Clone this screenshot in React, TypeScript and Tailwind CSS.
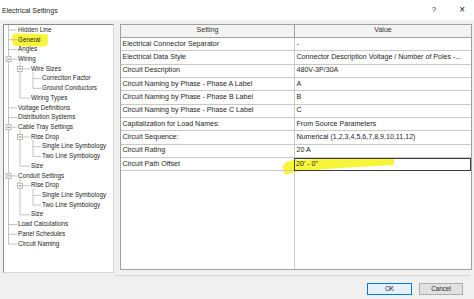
import React from "react";

type Node = { label: string; level: number; exp?: boolean };

const tree: Node[] = [
  { label: "Hidden Line", level: 0 },
  { label: "General", level: 0 },
  { label: "Angles", level: 0 },
  { label: "Wiring", level: 0, exp: true },
  { label: "Wire Sizes", level: 1, exp: true },
  { label: "Correction Factor", level: 2 },
  { label: "Ground Conductors", level: 2 },
  { label: "Wiring Types", level: 1 },
  { label: "Voltage Definitions", level: 0 },
  { label: "Distribution Systems", level: 0 },
  { label: "Cable Tray Settings", level: 0, exp: true },
  { label: "Rise Drop", level: 1, exp: true },
  { label: "Single Line Symbology", level: 2 },
  { label: "Two Line Symbology", level: 2 },
  { label: "Size", level: 1 },
  { label: "Conduit Settings", level: 0, exp: true },
  { label: "Rise Drop", level: 1, exp: true },
  { label: "Single Line Symbology", level: 2 },
  { label: "Two Line Symbology", level: 2 },
  { label: "Size", level: 1 },
  { label: "Load Calculations", level: 0 },
  { label: "Panel Schedules", level: 0 },
  { label: "Circuit Naming", level: 0 },
];

const rows: [string, string][] = [
  ["Electrical Connector Separator", "-"],
  ["Electrical Data Style", "Connector Description Voltage / Number of Poles -..."],
  ["Circuit Description", "480V-3P/30A"],
  ["Circuit Naming by Phase - Phase A Label", "A"],
  ["Circuit Naming by Phase - Phase B Label", "B"],
  ["Circuit Naming by Phase - Phase C Label", "C"],
  ["Capitalization for Load Names:", "From Source Parameters"],
  ["Circuit Sequence:", "Numerical (1,2,3,4,5,6,7,8,9,10,11,12)"],
  ["Circuit Rating", "20 A"],
  ["Circuit Path Offset", "20' - 0\""],
];

const RH = 9.73;
const Y0 = 4.97;
const LX = [4.5, 16, 29];
const TX = [14, 27, 38];

function TreeLines() {
  const lines: React.ReactNode[] = [];
  const cy = (i: number) => Y0 + RH * i;
  lines.push(<line key="v0" x1={LX[0]} y1={0} x2={LX[0]} y2={cy(tree.length - 1)} />);
  tree.forEach((n, i) => {
    const x = LX[n.level];
    lines.push(<line key={"h" + i} x1={x} y1={cy(i)} x2={TX[n.level] - 1} y2={cy(i)} />);
    if (n.exp) {
      let last = -1;
      for (let j = i + 1; j < tree.length; j++) {
        if (tree[j].level <= n.level) break;
        if (tree[j].level === n.level + 1) last = j;
      }
      if (last > 0) {
        const cx = LX[n.level + 1];
        lines.push(<line key={"vc" + i} x1={cx} y1={cy(i) + 3} x2={cx} y2={cy(last)} />);
      }
    }
  });
  const boxes = tree.map((n, i) =>
    n.exp ? (
      <g key={"b" + i}>
        <rect x={LX[n.level] - 2.5} y={cy(i) - 2.5} width={5} height={5} fill="#fff" stroke="#a8a8a8" strokeWidth={0.8} />
        <line x1={LX[n.level] - 1.3} y1={cy(i)} x2={LX[n.level] + 1.3} y2={cy(i)} stroke="#555" strokeWidth={0.8} />
      </g>
    ) : null
  );
  return (
    <svg className="absolute inset-0 pointer-events-none" width="110" height="248">
      <path d="M8 10.5 Q9 8.5 12 8.5 L42 9 Q44.5 9.5 44 13 L43.5 20 Q42 22 38 21.5 L12 21 Q9 21 8.5 18 Z" fill="#f7f53a" />
      <g stroke="#b4b4b4" strokeWidth={0.8}>{lines}</g>
      {boxes}
    </svg>
  );
}

export default function App() {
  return (
    <div
      className="w-[474px] h-[299px] bg-[#f0f0f0] flex flex-col text-[#1e1e1e] overflow-hidden relative"
      style={{ fontFamily: '"Liberation Sans", Arial, sans-serif' }}
    >
      {/* Title bar */}
      <div className="h-[20px] bg-white flex items-center pl-[2px] pr-[9px] shrink-0">
        <span className="text-[7px] leading-none">Electrical Settings</span>
        <span className="ml-auto text-[8px] leading-none mr-[23px]">?</span>
        <span className="text-[10px] leading-none">×</span>
      </div>

      {/* Body */}
      <div className="flex pt-[4px]">
        {/* Tree */}
        <div className="ml-[3px] w-[111px] h-[249px] bg-white border border-[#8a8a8a] border-r-[#d8d8d8] border-b-[#d8d8d8] relative shrink-0">
          <TreeLines />
          <div className="relative flex flex-col pt-[0.1px]">
            {tree.map((n, i) => (
              <div
                key={i}
                className="h-[9.73px] flex items-center text-[6.3px] leading-none whitespace-nowrap"
                style={{ paddingLeft: TX[n.level] }}
              >
                {n.label}
              </div>
            ))}
          </div>
        </div>

        {/* Table */}
        <div className="ml-[6px] w-[352px] h-[246px] bg-white border border-[#a0a0a0] flex flex-col text-[7.1px] leading-none relative shrink-0">
          <svg className="absolute left-[161px] top-[131px] pointer-events-none" width="116" height="22">
            <path d="M1 10 Q4 5 12 4 L48 2.5 L110 1 Q113 3 112 9 L58 12 L18 15 Q8 17 4 19 Q0 16 1 10 Z" fill="#f7f53a" />
          </svg>
          <div className="flex h-[13px] bg-[#f3f3f3] border-b border-[#a0a0a0] text-[#333] shrink-0 relative">
            <div className="w-[174px] flex items-center justify-center border-r border-[#a0a0a0]">Setting</div>
            <div className="flex-1 flex items-center justify-center">Value</div>
          </div>
          <div className="flex-1 flex relative">
            <div className="w-[174px] border-r border-[#c8c8c8] flex flex-col">
              {rows.map(([s], i) => (
                <div key={i} className="h-[13.33px] border-b border-[#c8c8c8] flex items-center pl-[1.5px] whitespace-nowrap">
                  {s}
                </div>
              ))}
            </div>
            <div className="flex-1 flex flex-col">
              {rows.map(([, v], i) => (
                <div
                  key={i}
                  className={
                    i === rows.length - 1
                      ? "h-[13.33px] border border-[#3c3c3c] flex items-center pl-[1px] whitespace-nowrap -ml-px"
                      : "h-[13.33px] border-b border-[#c8c8c8] flex items-center pl-[1.5px] whitespace-nowrap overflow-hidden"
                  }
                >
                  {v}
                </div>
              ))}
            </div>
          </div>
        </div>
      </div>

      {/* separator */}
      <div className="ml-[115px] mr-[4px] mt-[2px] h-px bg-[#d6d6d6]" />

      {/* Buttons */}
      <div className="flex justify-end pr-[11px] mt-[7px] gap-[7px]">
        <div className="w-[45px] h-[12px] border border-[#0078d7] bg-[#e5f1fb] flex items-center justify-center text-[6.3px] leading-none">
          OK
        </div>
        <div className="w-[44px] h-[12px] border border-[#adadad] bg-[#e1e1e1] flex items-center justify-center text-[6.3px] leading-none">
          Cancel
        </div>
      </div>
    </div>
  );
}
